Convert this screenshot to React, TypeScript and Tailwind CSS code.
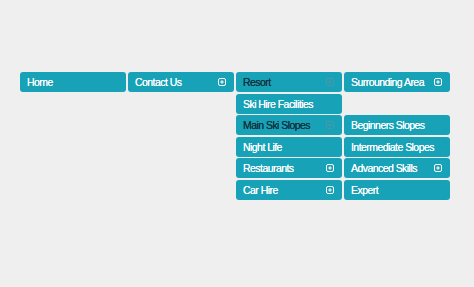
type Item = { label: string; sub?: boolean; active?: boolean };

const columns: (Item | null)[][] = [
  [{ label: "Home" }],
  [{ label: "Contact Us", sub: true }],
  [
    { label: "Resort", sub: true, active: true },
    { label: "Ski Hire Facilities" },
    { label: "Main Ski Slopes", sub: true, active: true },
    { label: "Night Life" },
    { label: "Restaurants", sub: true },
    { label: "Car Hire", sub: true },
  ],
  [
    { label: "Surrounding Area", sub: true },
    null,
    { label: "Beginners Slopes" },
    { label: "Intermediate Slopes" },
    { label: "Advanced Skills", sub: true },
    { label: "Expert" },
  ],
];

const PlusBox = ({ dim }: { dim?: boolean }) => (
  <svg width="8" height="8" viewBox="0 0 8 8" className={dim ? "text-[#4b98a8]" : "text-white"}>
    <rect x="0.5" y="0.5" width="7" height="7" rx="1.5" fill="none" stroke="currentColor" strokeWidth="1" />
    <path d="M4 2.2V5.8M2.2 4H5.8" stroke="currentColor" strokeWidth="1" />
  </svg>
);

const MenuItem = ({ item }: { item: Item }) => (
  <div className="h-[20px] w-[106px] rounded-[3px] bg-[#17a2b8] flex items-center justify-between pl-[7px] pr-[8px]">
    <span
      className={`text-[10.5px] tracking-[-0.55px] leading-none pt-px [text-shadow:0_0_0.5px_currentColor] ${
        item.active ? "text-[#12323d]" : "text-white"
      }`}
    >
      {item.label}
    </span>
    {item.sub && <PlusBox dim={item.active} />}
  </div>
);

export default function App() {
  return (
    <div
      className="w-[474px] h-[287px] bg-[#efefef] pt-[72px] pl-[20px]"
      style={{ fontFamily: '"Liberation Sans", Arial, sans-serif' }}
    >
      <div className="flex gap-[2px] items-start">
        {columns.map((col, i) => (
          <div key={i} className="flex flex-col gap-[1.5px]">
            {col.map((item, j) =>
              item ? <MenuItem key={j} item={item} /> : <div key={j} className="h-[20px] w-[106px]" />
            )}
          </div>
        ))}
      </div>
    </div>
  );
}
